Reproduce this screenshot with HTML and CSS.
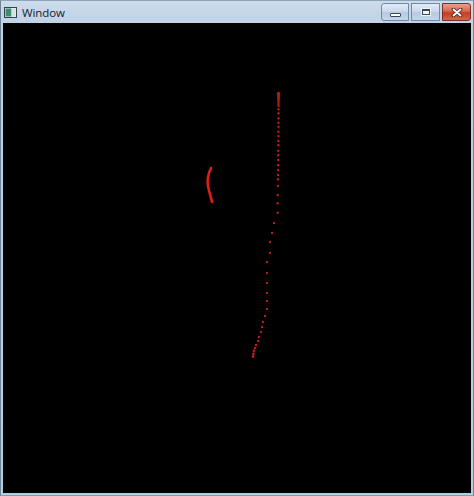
FILE: index.html
```html
<!DOCTYPE html>
<html>
<head>
<meta charset="utf-8">
<title>Window</title>
<link rel="stylesheet" href="styles.css">
</head>
<body>
<div class="window">
  <div class="titlebar">
    <svg class="app-icon" width="13" height="11" viewBox="0 0 13 11">
      <rect x="0.5" y="0.5" width="12" height="10" fill="#e8eef2" stroke="#34444e"/>
      <rect x="1.5" y="1.5" width="6" height="8" fill="#3e8c6c"/>
      <rect x="7.5" y="1.5" width="4" height="8" fill="#d3e1e8"/>
    </svg>
    <span class="title">Window</span>
    <div class="controls">
      <div class="btn btn-min"><span class="glyph-min"></span></div>
      <div class="btn btn-max"><span class="glyph-max"></span></div>
      <div class="btn btn-close">
        <svg width="12" height="9" viewBox="0 0 12 9">
          <path d="M2.5 1.5 L9.5 7.5 M9.5 1.5 L2.5 7.5" stroke="#4a2a26" stroke-width="3.6" stroke-linecap="round"/>
          <path d="M2.5 1.5 L9.5 7.5 M9.5 1.5 L2.5 7.5" stroke="#ffffff" stroke-width="1.8" stroke-linecap="round"/>
        </svg>
      </div>
    </div>
  </div>
  <div class="client">
    <svg class="canvas" width="468" height="470" viewBox="3 23 468 470">
      <defs>
        <filter id="soft" x="-50%" y="-50%" width="200%" height="200%">
          <feGaussianBlur stdDeviation="0.35"/>
        </filter>
      </defs>
      <path d="M211 168 C208 174 207 180 208 186 C209 192 211 197 212 202" fill="none" stroke="#de1c1c" stroke-width="2.6" stroke-linecap="round"/>
      <g fill="#b41e1e" filter="url(#soft)">
        <circle cx="278.5" cy="93.3" r="1.6"/>
        <circle cx="278.5" cy="95" r="1.5"/>
        <circle cx="278.5" cy="96.7" r="1.4"/>
        <circle cx="278.5" cy="98.3" r="1.3"/>
        <circle cx="278.5" cy="100" r="1.3"/>
        <circle cx="278.5" cy="102" r="1.2"/>
        <circle cx="278.5" cy="104" r="1.2"/>
        <circle cx="278.5" cy="106" r="1.2"/>
        <circle cx="278.5" cy="109.3" r="1.2"/>
        <circle cx="278.5" cy="113.3" r="1.2"/>
        <circle cx="278.5" cy="118.3" r="1.2"/>
        <circle cx="278.5" cy="122.7" r="1.2"/>
        <circle cx="278.5" cy="126.7" r="1.2"/>
        <circle cx="278.4" cy="131.7" r="1.2"/>
        <circle cx="278.4" cy="136" r="1.2"/>
        <circle cx="278.3" cy="140.7" r="1.2"/>
        <circle cx="278.3" cy="145.3" r="1.2"/>
        <circle cx="278.2" cy="150.7" r="1.2"/>
        <circle cx="278.2" cy="155.3" r="1.2"/>
        <circle cx="278.1" cy="160" r="1.2"/>
        <circle cx="278.1" cy="165" r="1.2"/>
        <circle cx="278" cy="170" r="1.2"/>
        <circle cx="278" cy="175" r="1.2"/>
        <circle cx="278" cy="179.3" r="1.2"/>
        <circle cx="277.9" cy="186" r="1.2"/>
        <circle cx="277.8" cy="195" r="1.2"/>
        <circle cx="277.7" cy="203.3" r="1.2"/>
        <circle cx="277.7" cy="212.7" r="1.2"/>
        <circle cx="274" cy="223" r="1.2"/>
        <circle cx="272" cy="233" r="1.2"/>
        <circle cx="270" cy="242" r="1.2"/>
        <circle cx="270" cy="253" r="1.2"/>
        <circle cx="267" cy="262" r="1.2"/>
        <circle cx="267" cy="273" r="1.2"/>
        <circle cx="267" cy="283" r="1.2"/>
        <circle cx="267" cy="293" r="1.2"/>
        <circle cx="267" cy="301" r="1.2"/>
        <circle cx="267" cy="309" r="1.2"/>
        <circle cx="265" cy="316" r="1.2"/>
        <circle cx="263" cy="322" r="1.2"/>
        <circle cx="262" cy="327" r="1.2"/>
        <circle cx="261" cy="332" r="1.2"/>
        <circle cx="259" cy="337" r="1.2"/>
        <circle cx="258" cy="341" r="1.2"/>
        <circle cx="256" cy="345" r="1.3"/>
        <circle cx="255" cy="348" r="1.3"/>
        <circle cx="254" cy="351" r="1.4"/>
        <circle cx="253.5" cy="354" r="1.4"/>
        <circle cx="253" cy="356.5" r="1.4"/>
      </g>
    </svg>
  </div>
</div>
</body>
</html>
```

FILE: styles.css
```css
html, body {
  margin: 0;
  padding: 0;
  background: #000;
}

.window {
  width: 474px;
  height: 496px;
  box-sizing: border-box;
  padding: 0 2px 2px 2px;
  display: flex;
  flex-direction: column;
  background: linear-gradient(to bottom, #cddcec 0px, #bed1e6 24px, #b4cee0 300px, #a8d3e1 496px);
  border-left: 1px solid #6f8596;
  border-right: 1px solid #6f8596;
  border-bottom: 1px solid #6fa6bb;
  border-top: 1px solid #8ea4ba;
}

.titlebar {
  height: 22px;
  flex: none;
  display: flex;
  align-items: center;
  font-family: "Open Sans", "Noto Sans", sans-serif;
  font-size: 11.5px;
  color: #17202b;
}

.app-icon {
  flex: none;
  margin-left: 1px;
  margin-top: 1px;
}

.title {
  margin-left: 5px;
  margin-top: 1px;
  letter-spacing: -0.1px;
}

.controls {
  margin-left: auto;
  display: flex;
  gap: 2px;
  align-self: flex-start;
  margin-top: 2px;
}

.btn {
  height: 18px;
  box-sizing: border-box;
  border: 1px solid #7289a7;
  display: flex;
  align-items: center;
  justify-content: center;
  background: linear-gradient(to bottom, #e3ebf5 0%, #cbd9ea 45%, #b6c9e0 55%, #c5d6ea 100%);
}

.btn-min { width: 28px; border-radius: 3px 0 0 3px; }
.btn-max { width: 29px; border-radius: 0; }
.btn-close {
  width: 29px;
  border-radius: 0 3px 3px 0;
  border-color: #7a3028;
  background: linear-gradient(to bottom, #e7a08f 0%, #d7664f 45%, #c43c22 55%, #d5654a 100%);
}

.glyph-min {
  width: 9px;
  height: 2px;
  margin-top: 6px;
  background: #fff;
  border: 1px solid #3b4756;
  border-radius: 1px;
}

.glyph-max {
  width: 6px;
  height: 3px;
  border: 1px solid #3b4756;
  border-top-width: 2px;
  background: #f2f6fb;
  box-shadow: 0 0 0 1px #eef3f9;
}

.client {
  flex: 1;
  background: #000;
  overflow: hidden;
}

.canvas {
  display: block;
}
```
